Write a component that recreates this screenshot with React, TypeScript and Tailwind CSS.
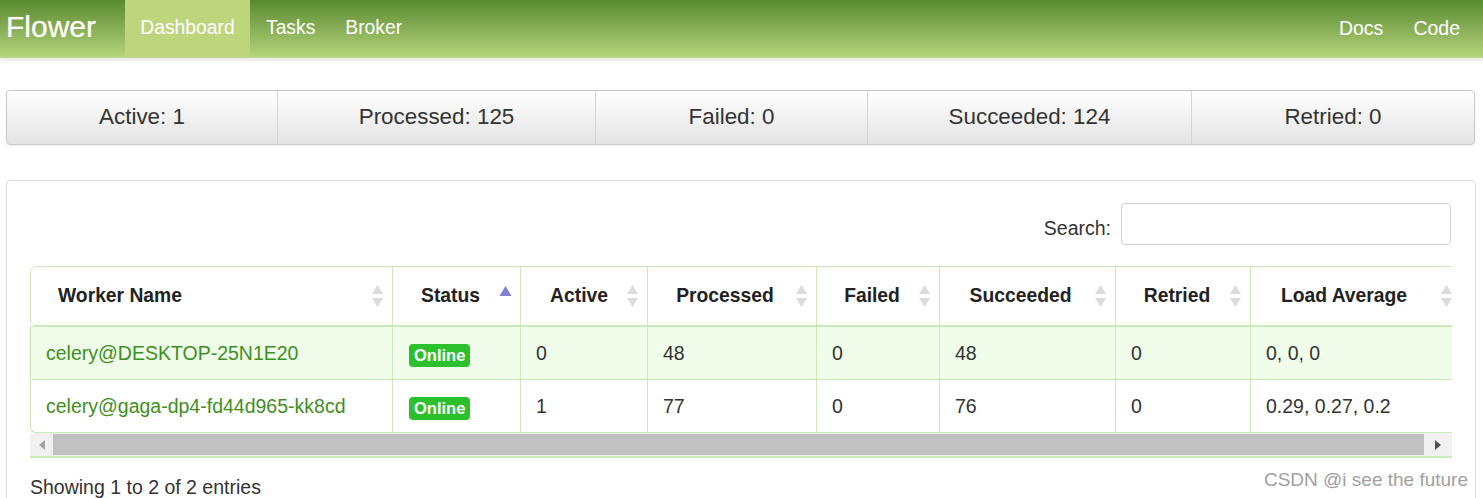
import React from "react";

const stats = [
  { label: "Active: 1", w: "w-[271px]" },
  { label: "Processed: 125", w: "w-[318px]" },
  { label: "Failed: 0", w: "w-[272px]" },
  { label: "Succeeded: 124", w: "w-[324px]" },
  { label: "Retried: 0", w: "flex-1" },
];

const cols = [
  { name: "Worker Name", w: "w-[362px]", align: "justify-start pl-[27px]" },
  { name: "Status", w: "w-[128px]", align: "justify-center pr-[12px]", sorted: true },
  { name: "Active", w: "w-[127px]", align: "justify-center pr-[10px]" },
  { name: "Processed", w: "w-[169px]", align: "justify-center pr-[14px]" },
  { name: "Failed", w: "w-[123px]", align: "justify-center pr-[12px]" },
  { name: "Succeeded", w: "w-[176px]", align: "justify-center pr-[14px]" },
  { name: "Retried", w: "w-[135px]", align: "justify-center pr-[12px]" },
  { name: "Load Average", w: "w-[210px]", align: "justify-center pr-[24px]" },
];

const rows = [
  ["celery@DESKTOP-25N1E20", "0", "48", "0", "48", "0", "0, 0, 0"],
  ["celery@gaga-dp4-fd44d965-kk8cd", "1", "77", "0", "76", "0", "0.29, 0.27, 0.2"],
];

function SortBoth() {
  return (
    <svg width="13" height="24" viewBox="0 0 13 24" className="absolute right-[8px] top-1/2 -translate-y-1/2">
      <polygon points="6.5,1 12,10 1,10" fill="#dcdcdc" />
      <polygon points="6.5,23 12,14 1,14" fill="#dcdcdc" />
    </svg>
  );
}

function SortAsc() {
  return (
    <svg width="13" height="24" viewBox="0 0 13 24" className="absolute right-[8px] top-[18px]">
      <polygon points="6.5,1 12.5,11 0.5,11" fill="#7f80d6" />
    </svg>
  );
}

export default function App() {
  return (
    <div className="relative w-[1483px] h-[498px] overflow-hidden bg-white font-['Liberation_Sans',Arial,sans-serif] text-[#333]">
      {/* navbar */}
      <div className="h-[58px] bg-gradient-to-b from-[#5a8b31] to-[#b5d37b] border-b border-[#c2da93] shadow-[0_2px_4px_rgba(0,0,0,0.12)] flex items-stretch">
        <div className="w-[125px] pl-[6px] flex items-center text-[30px] text-white [text-shadow:0_0_1px_rgba(255,255,180,0.6)] pb-[4px]">
          Flower
        </div>
        <div className="w-[125px] flex items-center justify-center bg-[#bdd57d] text-[19.3px] text-white">Dashboard</div>
        <div className="pl-[16px] pr-[15px] flex items-center text-[19.3px] text-white">Tasks</div>
        <div className="px-[15px] flex items-center text-[19.3px] text-white">Broker</div>
        <div className="ml-auto flex items-stretch pr-[8px]">
          <div className="px-[15px] flex items-center text-[19.5px] text-white">Docs</div>
          <div className="px-[15px] flex items-center text-[19.5px] text-white">Code</div>
        </div>
      </div>

      {/* stats */}
      <div className="mx-[6px] mt-[32px] w-[1469px] h-[55px] flex rounded-[4px] border border-[#c8c8c8] bg-gradient-to-b from-white to-[#e4e4e4] shadow-[0_1px_2px_rgba(0,0,0,0.08)]">
        {stats.map((s, i) => (
          <div
            key={s.label}
            className={`${s.w} flex items-center justify-center text-[22.4px] text-[#333] pb-[1px] ${i < stats.length - 1 ? "border-r border-[#d4d4d4]" : ""}`}
          >
            {s.label}
          </div>
        ))}
      </div>

      {/* panel */}
      <div className="mx-[6px] mt-[35px] w-[1470px] h-[400px] rounded-[4px] border border-[#dedede] px-[23px] pt-[22px]">
        <div className="flex items-center justify-end pr-[1px]">
          <span className="text-[19.5px] text-[#333] mr-[10px] mt-[10px]">Search:</span>
          <div className="w-[330px] h-[42px] rounded-[4px] border border-[#cfcfcf]" />
        </div>

        <div className="mt-[21px] w-[1422px] overflow-hidden">
          <div className="w-[1422px] overflow-hidden">
            <div className="w-[1460px]">
              {/* header */}
              <div className="flex h-[60px] border border-[#c9ebb5] rounded-tl-[6px] rounded-bl-[6px]">
                {cols.map((c, i) => (
                  <div
                    key={c.name}
                    className={`${c.w} relative flex items-center ${c.align} text-[19.3px] font-bold text-[#222] pt-[1px] ${i < cols.length - 1 ? "border-r border-[#c9ebb5]" : ""}`}
                  >
                    {c.name}
                    {c.sorted ? <SortAsc /> : <SortBoth />}
                  </div>
                ))}
              </div>
              {/* rows */}
              {rows.map((r, ri) => (
                <div
                  key={r[0]}
                  className={`flex ${ri === 0 ? "h-[54px] bg-[#effdea] border-t border-[#c9ebb5]" : "h-[53px] bg-white"} border-b border-l border-[#c9ebb5] ${ri === 1 ? "rounded-bl-[6px]" : ""}`}
                >
                  <div className="w-[362px] flex items-center pl-[15px] pt-[2px] text-[19.5px] text-[#3f8f22] border-r border-[#c9ebb5]">{r[0]}</div>
                  <div className="w-[128px] flex items-center pl-[16px] pt-[4px] border-r border-[#c9ebb5]">
                    <span className="px-[5px] h-[23px] flex items-center rounded-[4px] bg-[#2cc12c] text-white font-bold text-[16.5px]">Online</span>
                  </div>
                  {r.slice(1).map((v, ci) => (
                    <div
                      key={ci}
                      className={`${cols[ci + 2].w} flex items-center pl-[15px] pt-[2px] text-[19.5px] text-[#333] ${ci < 5 ? "border-r border-[#c9ebb5]" : ""}`}
                    >
                      {v}
                    </div>
                  ))}
                </div>
              ))}
            </div>
          </div>
          {/* scrollbar */}
          <div className="flex h-[23px] bg-[#f1f1f1] border-b-2 border-[#c9ebb5] box-content">
            <div className="w-[23px] flex items-center justify-center">
              <svg width="8" height="10" viewBox="0 0 8 10">
                <polygon points="7,0 7,10 1,5" fill="#a3a3a3" />
              </svg>
            </div>
            <div className="w-[1371px] my-[1px] bg-[#c1c1c1]" />
            <div className="flex-1 flex items-center justify-center">
              <svg width="8" height="10" viewBox="0 0 8 10">
                <polygon points="1,0 1,10 7,5" fill="#505050" />
              </svg>
            </div>
          </div>
        </div>

        <div className="mt-[15px] text-[19.5px] text-[#333]">Showing 1 to 2 of 2 entries</div>
      </div>

      <div className="absolute right-[15px] bottom-[4px] text-[19px] text-[#a0a0a0] [text-shadow:0_0_1px_rgba(255,255,255,0.8)]">
        CSDN @i see the future
      </div>
    </div>
  );
}
